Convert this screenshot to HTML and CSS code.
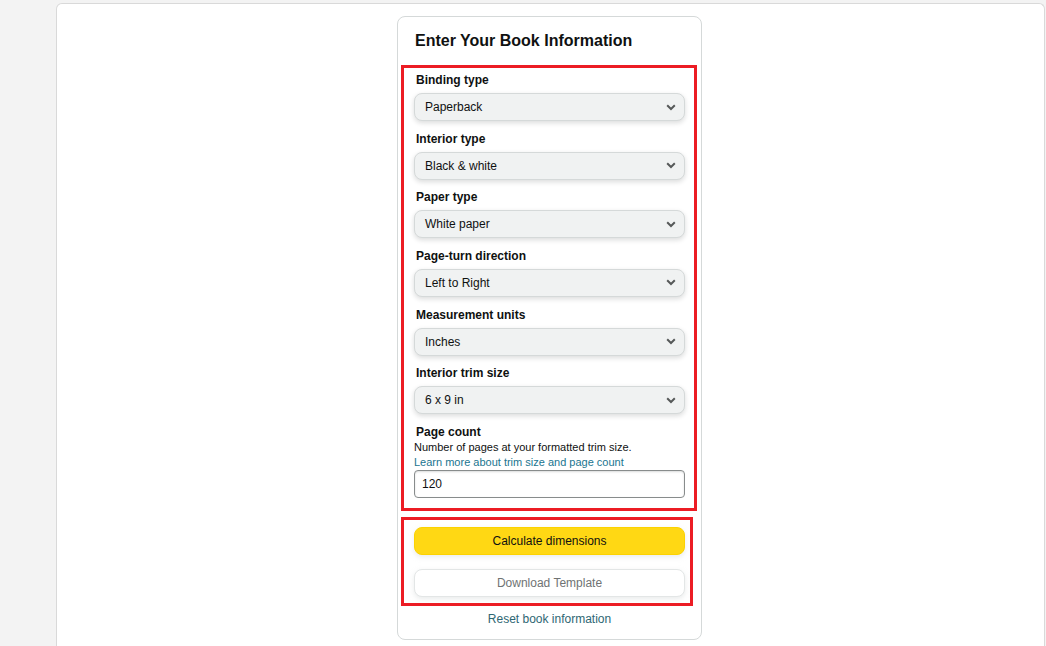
FILE: index.html
```html
<!DOCTYPE html>
<html lang="en">
<head>
<meta charset="utf-8">
<title>Enter Your Book Information</title>
<link rel="stylesheet" href="styles.css">
</head>
<body>
<div class="panel">
  <div class="card">
    <h2 class="card-title">Enter Your Book Information</h2>
    <div class="highlight fields">
      <div class="field">
        <div class="label">Binding type</div>
        <div class="select"><span>Paperback</span><svg class="chev" width="10" height="7" viewBox="0 0 10 7"><polyline points="1.2,1.3 5,5 8.8,1.3" fill="none" stroke="#565959" stroke-width="2"/></svg></div>
      </div>
      <div class="field">
        <div class="label">Interior type</div>
        <div class="select"><span>Black &amp; white</span><svg class="chev" width="10" height="7" viewBox="0 0 10 7"><polyline points="1.2,1.3 5,5 8.8,1.3" fill="none" stroke="#565959" stroke-width="2"/></svg></div>
      </div>
      <div class="field">
        <div class="label">Paper type</div>
        <div class="select"><span>White paper</span><svg class="chev" width="10" height="7" viewBox="0 0 10 7"><polyline points="1.2,1.3 5,5 8.8,1.3" fill="none" stroke="#565959" stroke-width="2"/></svg></div>
      </div>
      <div class="field">
        <div class="label">Page-turn direction</div>
        <div class="select"><span>Left to Right</span><svg class="chev" width="10" height="7" viewBox="0 0 10 7"><polyline points="1.2,1.3 5,5 8.8,1.3" fill="none" stroke="#565959" stroke-width="2"/></svg></div>
      </div>
      <div class="field">
        <div class="label">Measurement units</div>
        <div class="select"><span>Inches</span><svg class="chev" width="10" height="7" viewBox="0 0 10 7"><polyline points="1.2,1.3 5,5 8.8,1.3" fill="none" stroke="#565959" stroke-width="2"/></svg></div>
      </div>
      <div class="field">
        <div class="label">Interior trim size</div>
        <div class="select"><span>6 x 9 in</span><svg class="chev" width="10" height="7" viewBox="0 0 10 7"><polyline points="1.2,1.3 5,5 8.8,1.3" fill="none" stroke="#565959" stroke-width="2"/></svg></div>
      </div>
      <div class="field last">
        <div class="label">Page count</div>
        <div class="desc">Number of pages at your formatted trim size.</div>
        <div class="desc"><a class="link" href="#">Learn more about trim size and page count</a></div>
        <div class="input">120</div>
      </div>
    </div>
    <div class="highlight actions">
      <button class="btn btn-primary" type="button">Calculate dimensions</button>
      <button class="btn btn-secondary" type="button">Download Template</button>
    </div>
    <div class="reset"><a class="reset-link" href="#">Reset book information</a></div>
  </div>
</div>
</body>
</html>
```
FILE: styles.css
```css
html, body {
  margin: 0;
  padding: 0;
  height: 100%;
  overflow: hidden;
}
body {
  background: #f3f3f3;
  font-family: "Liberation Sans", Arial, sans-serif;
  color: #0f1111;
}
.panel {
  margin: 3px 1px 0 56px;
  height: calc(100% - 3px);
  background: #fff;
  border: 1px solid #d9d9d9;
  border-bottom: 0;
  border-radius: 6px 6px 0 0;
  padding-top: 12px;
  box-sizing: border-box;
}
.card {
  width: 305px;
  margin: 0 auto;
  box-sizing: border-box;
  border: 1px solid #d5d9d9;
  border-radius: 8px;
  padding: 0 0 12px 0;
  transform: translateX(-1px);
}
.card-title {
  margin: 14px 0 14px 17px;
  font-size: 16px;
  line-height: 20px;
  font-weight: 700;
}
.highlight {
  border: 3px solid #ec1c24;
  box-sizing: border-box;
}
.fields {
  margin: 0 4px 0 3px;
  padding: 4px 9px 10px 10px;
}
.field {
  margin-bottom: 9.67px;
}
.field.last {
  margin-bottom: 0;
}
.label {
  font-size: 12px;
  line-height: 16px;
  font-weight: 700;
  padding-left: 2px;
  margin-bottom: 5px;
}
.field.last .label {
  margin-bottom: 0;
}
.select {
  height: 28px;
  box-sizing: border-box;
  background: #f0f2f2;
  border: 1px solid #d5d9d9;
  border-radius: 8px;
  box-shadow: 0 2px 5px rgba(15, 17, 17, 0.15);
  display: flex;
  align-items: center;
  justify-content: space-between;
  padding: 0 8px 0 10px;
  font-size: 12px;
}
.chev {
  display: block;
}
.desc {
  font-size: 11px;
  line-height: 15px;
  color: #0f1111;
}
.link {
  color: #1a7590;
  text-decoration: none;
}
.input {
  height: 28px;
  box-sizing: border-box;
  border: 1px solid #888c8c;
  border-radius: 4px;
  box-shadow: inset 0 1px 2px rgba(15, 17, 17, 0.15);
  display: flex;
  align-items: center;
  padding-left: 7px;
  font-size: 12px;
}
.actions {
  margin: 6px 8px 0 3px;
  padding: 7px 5px 6px 10px;
  display: flex;
  flex-direction: column;
  gap: 14px;
}
.btn {
  height: 28px;
  width: 100%;
  box-sizing: border-box;
  border-radius: 8px;
  font-family: "Liberation Sans", Arial, sans-serif;
  font-size: 12px;
  padding: 0;
  cursor: pointer;
}
.btn-primary {
  background: #ffd814;
  border: 1px solid #fcd200;
  color: #0f1111;
  box-shadow: 0 2px 5px rgba(213, 217, 217, 0.5);
}
.btn-secondary {
  background: #fff;
  border: 1px solid #e3e6e6;
  color: #6f7373;
  box-shadow: 0 2px 5px rgba(213, 217, 217, 0.5);
}
.reset {
  margin-top: 5px;
  text-align: center;
  font-size: 12px;
  line-height: 16px;
}
.reset-link {
  color: #2e6773;
  text-decoration: none;
}
```
